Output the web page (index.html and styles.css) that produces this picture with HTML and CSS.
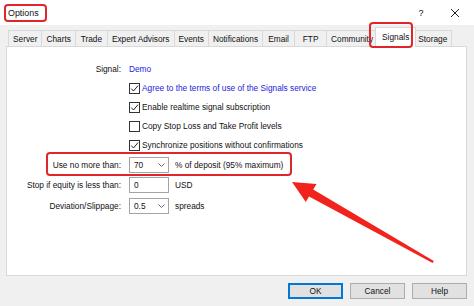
FILE: index.html
```html
<!DOCTYPE html>
<html>
<head>
<meta charset="utf-8">
<link rel="stylesheet" href="styles.css">
</head>
<body>
<div class="window">
  <div class="titlebar">
    <span class="title">Options</span>
    <span class="help">?</span>
    <span class="close"><svg width="10" height="10" viewBox="0 0 10 10"><path d="M1 1L9 9M9 1L1 9" stroke="#222" stroke-width="1"/></svg></span>
  </div>
  <div class="tabs">
    <div class="tab">Server</div>
    <div class="tab">Charts</div>
    <div class="tab">Trade</div>
    <div class="tab">Expert Advisors</div>
    <div class="tab">Events</div>
    <div class="tab">Notifications</div>
    <div class="tab">Email</div>
    <div class="tab">FTP</div>
    <div class="tab">Community</div>
    <div class="tab active">Signals</div>
    <div class="tab">Storage</div>
  </div>
  <div class="panel">
    <div class="form">
      <div class="label">Signal:</div>
      <div class="ctl"><span class="link">Demo</span></div>

      <div></div>
      <div class="ctl"><span class="cb"><svg width="9" height="9" viewBox="0 0 9 9"><path d="M1.2 4.6L3.5 7L8 1.6" fill="none" stroke="#222" stroke-width="1"/></svg></span><span class="link">Agree to the terms of use of the Signals service</span></div>

      <div></div>
      <div class="ctl"><span class="cb"><svg width="9" height="9" viewBox="0 0 9 9"><path d="M1.2 4.6L3.5 7L8 1.6" fill="none" stroke="#222" stroke-width="1"/></svg></span><span>Enable realtime signal subscription</span></div>

      <div></div>
      <div class="ctl"><span class="cb"></span><span>Copy Stop Loss and Take Profit levels</span></div>

      <div></div>
      <div class="ctl"><span class="cb"><svg width="9" height="9" viewBox="0 0 9 9"><path d="M1.2 4.6L3.5 7L8 1.6" fill="none" stroke="#222" stroke-width="1"/></svg></span><span>Synchronize positions without confirmations</span></div>

      <div class="label">Use no more than:</div>
      <div class="ctl gap"><span class="input combo"><span>70</span><svg width="7" height="4" viewBox="0 0 7 4"><path d="M0.5 0.5L3.5 3.5L6.5 0.5" fill="none" stroke="#666" stroke-width="1"/></svg></span><span>% of deposit (95% maximum)</span></div>

      <div class="label">Stop if equity is less than:</div>
      <div class="ctl gap"><span class="input"><span>0</span></span><span>USD</span></div>

      <div class="label">Deviation/Slippage:</div>
      <div class="ctl gap"><span class="input combo"><span>0.5</span><svg width="7" height="4" viewBox="0 0 7 4"><path d="M0.5 0.5L3.5 3.5L6.5 0.5" fill="none" stroke="#666" stroke-width="1"/></svg></span><span>spreads</span></div>
    </div>
  </div>
  <div class="buttons">
    <div class="btn default">OK</div>
    <div class="btn">Cancel</div>
    <div class="btn">Help</div>
  </div>

  <div class="mark mark-title"></div>
  <div class="mark mark-tab"></div>
  <div class="mark mark-row"></div>
  <svg class="arrow" width="474" height="306" viewBox="0 0 474 306">
    <polygon points="292,182 316.5,184 313.2,189.6 433.8,261 432.6,263 309,196.6 305.8,202" fill="#f2231c"/>
  </svg>
</div>
</body>
</html>
```
FILE: styles.css
```css
* { box-sizing: border-box; }
html, body { margin: 0; padding: 0; }
body {
  width: 474px;
  height: 306px;
  overflow: hidden;
  background: #f0f0f0;
  font-family: "Liberation Sans", Arial, sans-serif;
  font-size: 8.3px;
  color: #111;
}
.window {
  position: relative;
  width: 474px;
  height: 306px;
  background: #f0f0f0;
}
.titlebar {
  height: 25px;
  background: #fff;
  display: flex;
  align-items: center;
  padding-right: 7px;
}
.title {
  margin-left: 8px;
  font-size: 8.9px;
  flex: 1;
}
.help {
  width: 14px;
  text-align: center;
  font-size: 9px;
  margin-right: 15px;
}
.close {
  width: 24px;
  display: flex;
  justify-content: center;
  align-items: center;
}
.tabs {
  height: 21px;
  display: flex;
  align-items: flex-end;
  padding-left: 8px;
  position: relative;
  z-index: 1;
}
.tab {
  height: 16px;
  min-width: 33px;
  padding: 0 4px;
  display: flex;
  align-items: center;
  justify-content: center;
  border: 1px solid #d9d9d9;
  border-bottom: none;
  margin-left: -1px;
  background: #f0f0f0;
  white-space: nowrap;
}
.tab:first-child { margin-left: 0; }
.tab.active {
  height: 20px;
  background: #fff;
  margin: 0 -2px -1px -3px;
  padding: 0 6px 2px;
  position: relative;
  z-index: 2;
}
.panel {
  margin: 0 7px 0 6px;
  height: 230px;
  background: #fff;
  border: 1px solid #d9d9d9;
  padding-top: 12.5px;
}
.form {
  display: grid;
  grid-template-columns: 114px auto;
  grid-template-rows: repeat(5, 19px) 20px 21px 21px;
  column-gap: 8px;
  align-items: center;
}
.label {
  text-align: right;
  white-space: nowrap;
}
.ctl {
  display: flex;
  align-items: center;
  white-space: nowrap;
}
.ctl.gap { gap: 6px; }
.link { color: #2323dc; }
.cb {
  width: 11px;
  height: 11px;
  border: 1px solid #333;
  background: #fff;
  margin-right: 2px;
  display: flex;
  align-items: center;
  justify-content: center;
}
.input {
  width: 40px;
  height: 16px;
  border: 1px solid #a4a4a4;
  background: #fff;
  display: flex;
  align-items: center;
  justify-content: space-between;
  padding: 0 3px 0 4px;
}
.buttons {
  display: flex;
  justify-content: flex-end;
  gap: 7px;
  padding: 7px 7px 0 0;
}
.btn {
  width: 55px;
  height: 16px;
  border: 1px solid #adadad;
  background: #e1e1e1;
  display: flex;
  align-items: center;
  justify-content: center;
}
.btn.default {
  border: 1px solid #0078d7;
  box-shadow: inset 0 0 0 1px #0078d7;
}
.mark {
  position: absolute;
  border: 2px solid #e0262b;
  border-radius: 4px;
  z-index: 5;
}
.mark-title { left: 4px; top: 4px; width: 43px; height: 18px; }
.mark-tab { left: 369px; top: 22px; width: 44px; height: 26px; }
.mark-row { left: 46px; top: 152px; width: 246px; height: 24px; }
.arrow {
  position: absolute;
  left: 0;
  top: 0;
  z-index: 6;
}
```
